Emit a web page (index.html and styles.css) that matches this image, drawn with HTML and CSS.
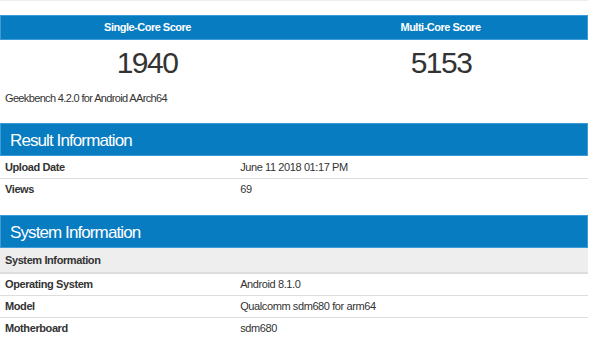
FILE: index.html
```html
<!DOCTYPE html>
<html lang="en">
<head>
  <meta charset="UTF-8" />
  <title>Geekbench Browser - Result</title>
  <link rel="stylesheet" href="styles.css">
</head>
<body>
  <div class="page">
    <div class="topline"></div>

    <div class="scores">
      <div class="score-head">Single-Core Score</div>
      <div class="score-head">Multi-Core Score</div>
      <div class="score-value">1940</div>
      <div class="score-value">5153</div>
    </div>

    <p class="version">Geekbench 4.2.0 for Android AArch64</p>

    <h3 class="section-title">Result Information</h3>
    <table class="info-table">
      <tbody>
        <tr><td class="name">Upload Date</td><td>June 11 2018 01:17 PM</td></tr>
        <tr><td class="name">Views</td><td>69</td></tr>
      </tbody>
    </table>

    <h3 class="section-title">System Information</h3>
    <table class="info-table">
      <thead>
        <tr><th colspan="2">System Information</th></tr>
      </thead>
      <tbody>
        <tr><td class="name">Operating System</td><td>Android 8.1.0</td></tr>
        <tr><td class="name">Model</td><td>Qualcomm sdm680 for arm64</td></tr>
        <tr><td class="name">Motherboard</td><td>sdm680</td></tr>
      </tbody>
    </table>
  </div>
</body>
</html>
```

FILE: styles.css
```css
* {
  margin: 0;
  padding: 0;
  box-sizing: border-box;
}

body {
  font-family: "Liberation Sans", Arial, sans-serif;
  font-size: 11px;
  letter-spacing: -0.4px;
  color: #333;
  background: #fff;
}

.page {
  width: 588px;
}

.topline {
  height: 1px;
  background: #eee;
  margin-bottom: 14px;
}

.scores {
  display: grid;
  grid-template-columns: 1fr 1fr;
}

.score-head {
  height: 25px;
  line-height: 23px;
  background: #077cc1;
  border-top: 1px solid #3f9bd6;
  border-bottom: 1px solid #3f9bd6;
  color: white;
  font-weight: bold;
  letter-spacing: -0.5px;
  text-align: center;
}

.score-head:first-child {
  border-left: 1px solid #3f9bd6;
}

.score-head:nth-child(2) {
  border-right: 1px solid #3f9bd6;
}

.score-value {
  height: 46px;
  line-height: 46px;
  font-size: 30px;
  letter-spacing: -1.5px;
  text-align: center;
}

.version {
  margin: 5px 0 18px 5px;
  line-height: 14px;
  letter-spacing: -0.65px;
}

.section-title {
  height: 33px;
  line-height: 33px;
  padding-left: 9px;
  background: #077cc1;
  border: 1px solid #3f9bd6;
  color: white;
  font-size: 17px;
  letter-spacing: -0.9px;
  font-weight: normal;
}

.info-table {
  width: 100%;
  border-collapse: collapse;
  margin-bottom: 15px;
}

.info-table th {
  height: 25px;
  padding: 0 5px;
  text-align: left;
  background: #eee;
  border-bottom: 2px solid #ddd;
}

.info-table td {
  height: 22px;
  padding: 0 5px;
  vertical-align: middle;
}

.info-table tr + tr td {
  border-top: 1px solid #ddd;
}

.info-table td.name {
  width: 40%;
  font-weight: bold;
}
```
